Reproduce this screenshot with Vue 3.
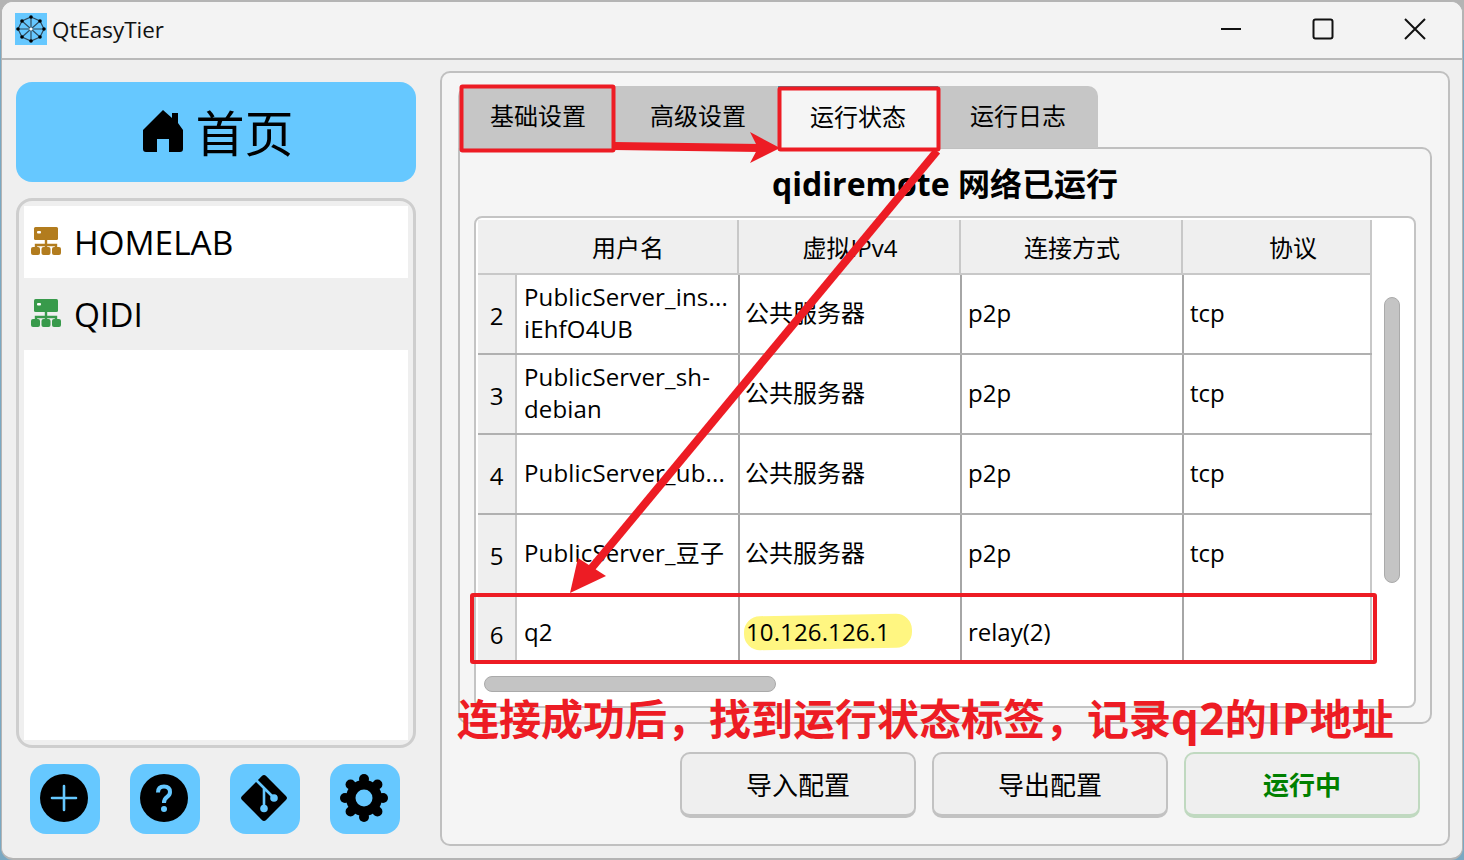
<script setup>
const tabs = [
  { label: '基础设置' },
  { label: '高级设置' },
  { label: '运行状态', active: true },
  { label: '运行日志' },
]
const columns = ['用户名', '虚拟IPv4', '连接方式', '协议']
const rows = [
  { id: 2, name: ['PublicServer_ins...', 'iEhfO4UB'], ip: '公共服务器', link: 'p2p', proto: 'tcp' },
  { id: 3, name: ['PublicServer_sh-', 'debian'], ip: '公共服务器', link: 'p2p', proto: 'tcp' },
  { id: 4, name: ['PublicServer_ub...'], ip: '公共服务器', link: 'p2p', proto: 'tcp' },
  { id: 5, name: ['PublicServer_豆子'], ip: '公共服务器', link: 'p2p', proto: 'tcp' },
  { id: 6, name: ['q2'], ip: '10.126.126.1', link: 'relay(2)', proto: '', mark: true, last: true },
]
const networks = [
  { name: 'HOMELAB', color: '#b27c1e' },
  { name: 'QIDI', color: '#389a4b', selected: true },
]
const spokes = [0, 45, 90, 135, 180, 225, 270, 315]
const actions = ['导入配置', '导出配置']
</script>

<template>
  <div class="screen">
    <div class="window">
      <header class="titlebar">
        <svg class="logo" viewBox="0 0 32 32">
          <rect width="32" height="32" fill="#66c8ff" />
          <g stroke="#2f4a5c" stroke-width="1.2" fill="none">
            <polygon points="16,4 25,8 29,16 25,24 16,28 7,24 3,16 7,8" />
            <line x1="16" y1="4" x2="16" y2="28" />
            <line x1="3" y1="16" x2="29" y2="16" />
            <line x1="7" y1="8" x2="25" y2="24" />
            <line x1="25" y1="8" x2="7" y2="24" />
          </g>
          <g fill="#000">
            <circle cx="16" cy="4" r="1.8" /><circle cx="25" cy="8" r="1.8" />
            <circle cx="29" cy="16" r="1.8" /><circle cx="25" cy="24" r="1.8" />
            <circle cx="16" cy="28" r="1.8" /><circle cx="7" cy="24" r="1.8" />
            <circle cx="3" cy="16" r="1.8" /><circle cx="7" cy="8" r="1.8" />
          </g>
          <circle cx="16" cy="16" r="1.6" fill="#fff" />
        </svg>
        <span class="app-name">QtEasyTier</span>
        <div class="win-controls">
          <svg class="win-btn" viewBox="0 0 22 22"><line x1="1" y1="11" x2="21" y2="11" /></svg>
          <svg class="win-btn" viewBox="0 0 22 22"><rect x="1.5" y="1.5" width="19" height="19" rx="2" /></svg>
          <svg class="win-btn" viewBox="0 0 22 22"><path d="M1 1L21 21M21 1L1 21" /></svg>
        </div>
      </header>

      <main class="content">
        <aside class="sidebar">
          <div class="home-btn">
            <svg class="home-icon" viewBox="0 0 40 42">
              <path d="M20 0L29 8V3H35V13L40 20V39Q40 42 37 42H26V29H14V42H3Q0 42 0 39V20Z" />
            </svg>
            <span class="home-label">首页</span>
          </div>

          <div class="net-list">
            <div v-for="n in networks" :key="n.name" class="net-row" :class="{ selected: n.selected }">
              <svg class="net-icon" viewBox="0 0 30 28" :style="{ color: n.color }">
                <rect x="3" y="0" width="24" height="13" rx="1.5" fill="currentColor" />
                <rect x="6" y="4" width="4" height="2.5" rx="1" fill="#fff" />
                <path d="M15 13V18M5 22V18H25V22M15 18V22" stroke="currentColor" stroke-width="2.4" fill="none" />
                <rect x="0" y="20" width="9" height="8" rx="2" fill="currentColor" />
                <rect x="10.5" y="20" width="9" height="8" rx="2" fill="currentColor" />
                <rect x="21" y="20" width="9" height="8" rx="2" fill="currentColor" />
              </svg>
              <span>{{ n.name }}</span>
            </div>
          </div>

          <div class="tool-row">
            <div class="tool-btn">
              <svg viewBox="0 0 48 48">
                <circle cx="24" cy="24" r="24" fill="#000" />
                <path d="M24 12V36M12 24H36" stroke="#66c8ff" stroke-width="2.6" stroke-linecap="round" />
              </svg>
            </div>
            <div class="tool-btn">
              <svg viewBox="0 0 48 48">
                <circle cx="24" cy="24" r="24" fill="#000" />
                <path d="M18 18.500Q18 12.500 24 12.500Q30 12.500 30 18Q30 21 27 23Q24 25 24 29" stroke="#66c8ff" stroke-width="4" fill="none" />
                <circle cx="24" cy="35" r="3" fill="#66c8ff" />
              </svg>
            </div>
            <div class="tool-btn">
              <svg viewBox="0 0 48 48">
                <rect x="7" y="7" width="34" height="34" rx="3" fill="#000" transform="rotate(45 24 24)" />
                <path d="M16 6L24 14M24 14V34M24 14L34 24" stroke="#66c8ff" stroke-width="2.6" fill="none" />
                <circle cx="24" cy="34.500" r="3.800" fill="#66c8ff" />
                <circle cx="34" cy="24" r="3.800" fill="#66c8ff" />
              </svg>
            </div>
            <div class="tool-btn">
              <svg viewBox="0 0 48 48">
                <circle cx="24" cy="24" r="18" fill="#000" />
                <circle v-for="a in spokes" :key="a" cx="24" cy="5" r="5" fill="#000" :transform="`rotate(${a} 24 24)`" />
                <circle cx="24" cy="24" r="8.500" fill="#66c8ff" />
              </svg>
            </div>
          </div>
        </aside>

        <section class="panel">
          <nav class="tabs">
            <div v-for="t in tabs" :key="t.label" class="tab" :class="{ active: t.active }">{{ t.label }}</div>
          </nav>
          <div class="pane">
            <h1 class="status-title">qidiremote 网络已运行</h1>
            <div class="table-frame">
              <div class="table-top">
                <div class="table">
                  <div class="thead">
                    <div class="corner"></div>
                    <div v-for="c in columns" :key="c" class="th">{{ c }}</div>
                  </div>
                  <div v-for="r in rows" :key="r.id" class="tr" :class="{ last: r.last }">
                    <div class="row-no">{{ r.id }}</div>
                    <div class="td name">
                      <span v-for="line in r.name" :key="line">{{ line }}</span>
                    </div>
                    <div class="td ip"><span :class="{ hl: r.mark }">{{ r.ip }}</span></div>
                    <div class="td">{{ r.link }}</div>
                    <div class="td">{{ r.proto }}</div>
                  </div>
                </div>
                <div class="vscroll"><div class="vthumb"></div></div>
              </div>
              <div class="hscroll"><div class="hthumb"></div></div>
            </div>
          </div>
          <div class="actions">
            <div v-for="a in actions" :key="a" class="action">{{ a }}</div>
            <div class="action running">运行中</div>
          </div>
        </section>
      </main>
    </div>

    <svg class="annot" viewBox="0 0 1464 860">
      <g fill="none" stroke="#ed1c24">
        <rect x="461.500" y="86.500" width="152" height="64" stroke-width="4" rx="1" />
        <rect x="779.500" y="88.500" width="159" height="61" stroke-width="4" rx="1" />
        <rect x="472" y="595" width="903" height="67" stroke-width="4" rx="1" />
        <path d="M614 146L760 148" stroke-width="8" />
        <path d="M937 151L585 576" stroke-width="8" />
      </g>
      <polygon points="780,148 750,132 758,148 750,163" fill="#ed1c24" />
      <polygon points="570,593 578,558 606,576" fill="#ed1c24" />
    </svg>
    <div class="annot-text">连接成功后，找到运行状态标签，记录<span class="latin">q2</span>的<span class="latin">IP</span>地址</div>
  </div>
</template>

<style scoped>
.screen {
  position: relative;
  width: 1464px;
  height: 860px;
  overflow: hidden;
  background: linear-gradient(#b4b4b4 0 40px, #7aa8c2 40px);
  font-family: "Open Sans", "Noto Sans CJK SC", sans-serif;
  color: #000;
}
.window {
  box-sizing: border-box;
  width: 1462px;
  height: 859px;
  margin-left: 1px;
  margin-top: 1px;
  border: 1px solid #b4b4b4;
  border-bottom-width: 2px;
  border-radius: 12px;
  overflow: hidden;
  background: #efefef;
  display: flex;
  flex-direction: column;
}
.titlebar {
  box-sizing: border-box;
  height: 58px;
  flex: none;
  background: #f3f3f3;
  border-bottom: 2px solid #b9b9b9;
  display: flex;
  align-items: center;
  padding: 0 0 0 13px;
}
.logo { width: 32px; height: 32px; margin-top: -2px; }
.app-name { margin-left: 5px; font-size: 22.400px; line-height: 32px; color: #111; }
.win-controls { margin-left: auto; display: flex; align-items: center; gap: 70px; padding-right: 36px; margin-top: -2px; }
.win-btn { width: 22px; height: 22px; fill: none; stroke: #111; stroke-width: 2; }
.content {
  flex: 1;
  min-height: 0;
  display: flex;
  padding: 11px 11px 12px 14px;
  gap: 24px;
}
.sidebar { width: 400px; flex: none; display: flex; flex-direction: column; padding-top: 11px; }
.home-btn {
  height: 100px;
  flex: none;
  background: #66c8ff;
  border-radius: 16px;
  display: flex;
  align-items: center;
  justify-content: center;
  gap: 12px;
  font-size: 49px;
  padding-left: 5px;
  box-sizing: border-box;
}
.home-label { margin-top: -4px; }
.home-icon { width: 40px; height: 42px; fill: #000; margin-top: -2px; }
.net-list {
  box-sizing: border-box;
  margin-top: 16px;
  height: 550px;
  border: 3px solid #cecece;
  border-radius: 16px;
  padding: 5px;
  background: #efefef;
  position: relative;
}
.net-list::after {
  content: "";
  display: block;
  height: 390px;
  background: #fff;
}
.net-row {
  height: 72px;
  display: flex;
  align-items: center;
  gap: 13px;
  padding-left: 7px;
  background: #fff;
  font-size: 33.400px;
}
.net-row.selected { background: #efefef; }
.net-icon { width: 30px; height: 28px; margin-top: -2px; }
.tool-row { display: flex; gap: 30px; padding: 16px 0 0 14px; }
.tool-btn {
  width: 70px;
  height: 70px;
  border-radius: 16px;
  background: #66c8ff;
  display: flex;
  align-items: center;
  justify-content: center;
}
.tool-btn svg { width: 48px; height: 48px; margin: -2px 0 0 -2px; }
.panel {
  box-sizing: border-box;
  width: 1010px;
  flex: none;
  border: 2px solid #c0c0c0;
  border-radius: 10px;
  background: #f5f5f5;
  padding: 13px 16px 0;
  display: flex;
  flex-direction: column;
}
.tabs { display: flex; height: 62px; flex: none; position: relative; z-index: 1; }
.tab {
  width: 160px;
  height: 62px;
  box-sizing: border-box;
  background: #c6c6c6;
  font-size: 24px;
  display: flex;
  align-items: center;
  justify-content: center;
  padding-bottom: 6px;
}
.tab:first-child { border-top-left-radius: 10px; }
.tab:last-child { border-top-right-radius: 10px; }
.tab.active { background: #f5f5f5; border-top: 2px solid #4f8f9f; }
.pane {
  box-sizing: border-box;
  height: 577px;
  margin-top: -1px;
  flex: none;
  border: 2px solid #c0c0c0;
  border-radius: 0 10px 10px 10px;
  padding: 0 14px;
  background: #f5f5f5;
}
.status-title {
  margin: 0;
  height: 67px;
  font-size: 32px;
  font-weight: 700;
  line-height: 70px;
  text-align: center;
}
.table-frame {
  box-sizing: border-box;
  height: 492px;
  border: 2px solid #c4c4c4;
  border-radius: 8px;
  background: #fff;
  padding: 2px 0 0 2px;
}
.table-top { display: flex; height: 442px; }
.table { width: 894px; flex: none; overflow: hidden; }
.thead { display: grid; grid-template-columns: 39px 222px 222px 222px 189px; background: #efefef; border-bottom: 2px solid #c8c8c8; height: 53px; }
.th {
  box-sizing: border-box;
  font-size: 24px;
  display: flex;
  align-items: center;
  justify-content: center;
  border-right: 2px solid #c8c8c8;
  padding-left: 2px;
}
.th:last-child { padding-left: 33px; }
.tr { display: grid; grid-template-columns: 39px 223px 222px 222px 188px; height: 80px; box-sizing: border-box; border-bottom: 2px solid #b0b0b0; }
.tr.last { height: 68px; border-bottom: 0; }
.row-no {
  background: #efefef;
  border-right: 2px solid #c8c8c8;
  font-size: 24px;
  display: flex;
  align-items: center;
  justify-content: center;
  box-sizing: border-box;
  padding-top: 2px;
}
.tr.last .row-no { padding-top: 10px; }
.td {
  box-sizing: border-box;
  border-right: 2px solid #a6a6a6;
  font-size: 24px;
  display: flex;
  align-items: center;
  padding: 0 0 2px 6px;
  line-height: 32px;
  white-space: nowrap;
}
.td:last-child { border-right: 2px solid #c8c8c8; }
.tr.last .td { padding-top: 6px; padding-bottom: 0; }
.td.name { flex-direction: column; align-items: flex-start; justify-content: center; padding-left: 7px; letter-spacing: .16px; }
.td.ip { padding-left: 5px; }
.hl { position: relative; z-index: 0; letter-spacing: .12px; margin-left: 1px; }
.hl::before {
  content: "";
  position: absolute;
  z-index: -1;
  left: -2px;
  right: -22px;
  top: -1px;
  bottom: -1px;
  border-radius: 16px;
  background: #fff681;
  transform: rotate(-1deg);
}
.vscroll { flex: 1; padding: 77px 0 0 12px; }
.vthumb {
  box-sizing: border-box;
  width: 16px;
  height: 286px;
  border-radius: 8px;
  background: #c4c4c4;
  border: 1px solid #aaa;
}
.hscroll { padding: 14px 0 0 6px; }
.hthumb {
  box-sizing: border-box;
  width: 292px;
  height: 16px;
  border-radius: 8px;
  background: #c4c4c4;
  border: 1px solid #aaa;
}
.actions { display: flex; gap: 16px; justify-content: flex-end; padding: 28px 12px 0 0; }
.action {
  box-sizing: border-box;
  width: 236px;
  height: 66px;
  border: 2px solid #c2c2c2;
  border-bottom-width: 4px;
  border-radius: 10px;
  background: #efefef;
  font-size: 26px;
  display: flex;
  align-items: center;
  justify-content: center;
}
.action.running { border-color: #c0d9c0; color: #008000; font-weight: 700; }
.annot { position: absolute; left: 0; top: 0; width: 1464px; height: 860px; pointer-events: none; z-index: 2; }
.annot-text {
  position: absolute;
  z-index: 3;
  left: 457px;
  top: 689px;
  font-size: 42px;
  line-height: 58px;
  font-weight: 700;
  color: #ed1c24;
  white-space: nowrap;
}
.latin { font-size: 44px; letter-spacing: .4px; }
</style>
